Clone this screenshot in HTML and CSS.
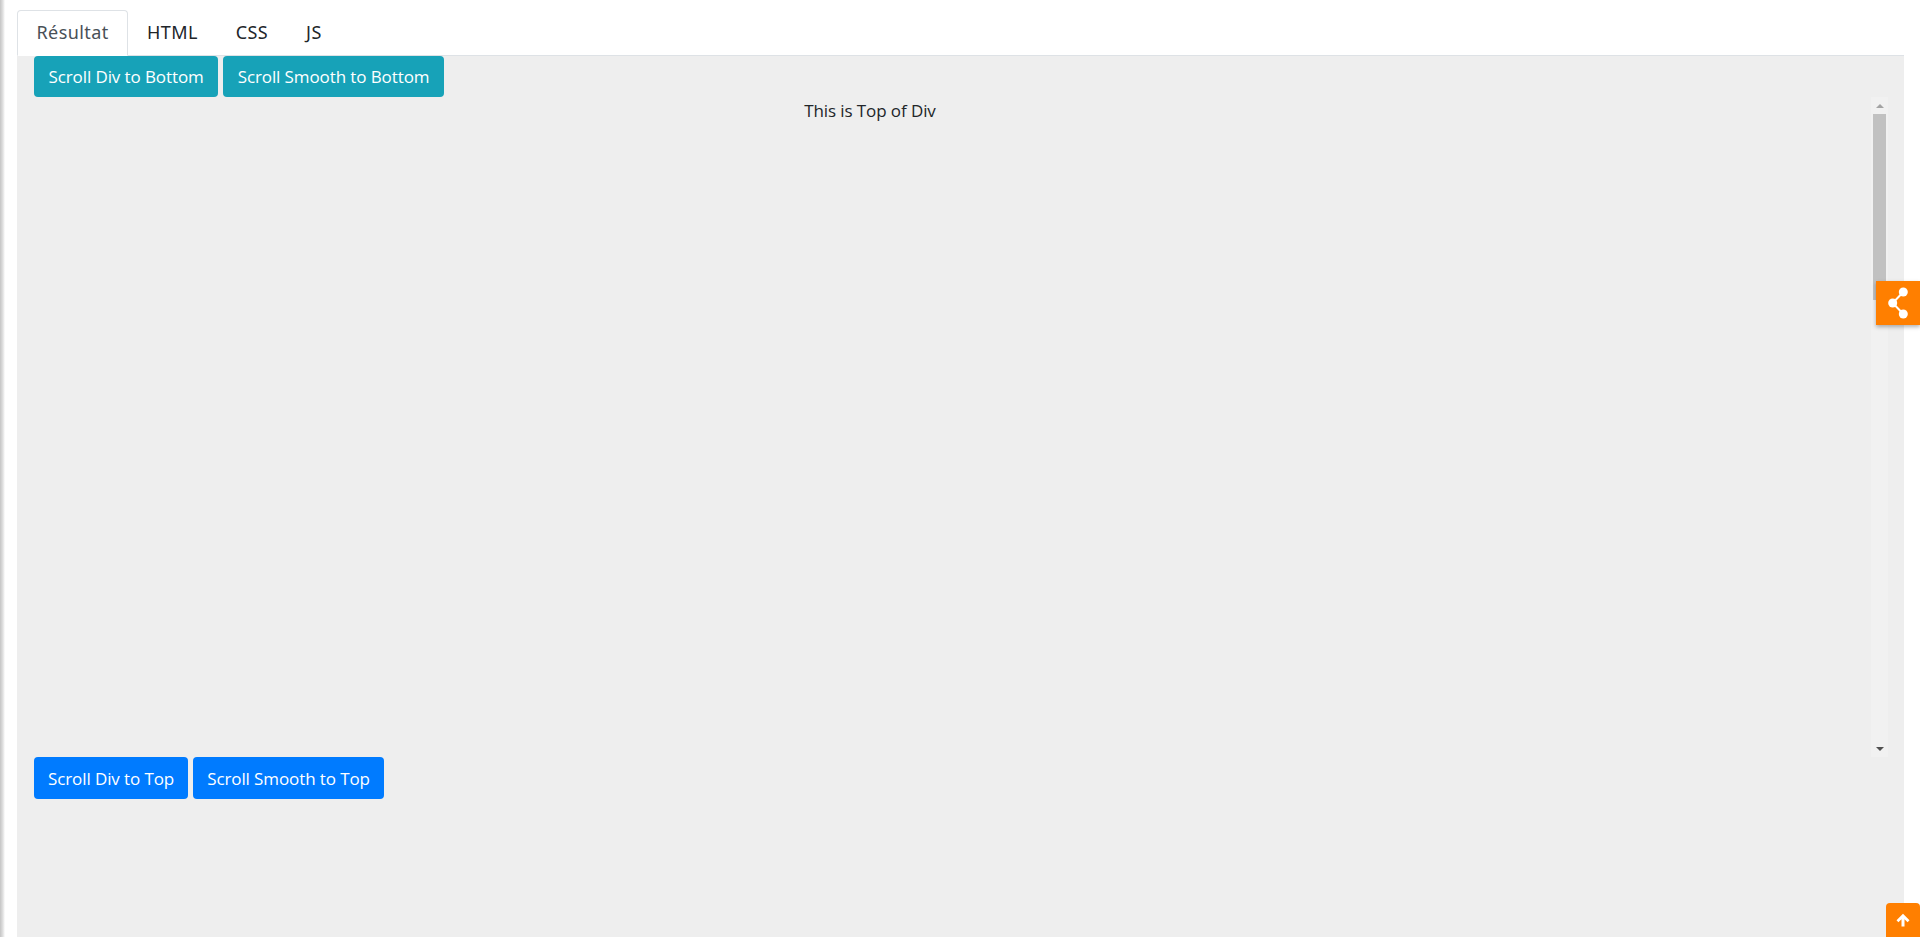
FILE: index.html
```html
<!DOCTYPE html>
<html lang="fr">
<head>
<meta charset="utf-8">
<title>Résultat</title>
<link rel="stylesheet" href="styles.css">
</head>
<body>
<div class="edge"></div>
<div class="page">
  <ul class="tabs">
    <li class="tab active">Résultat</li>
    <li class="tab">HTML</li>
    <li class="tab">CSS</li>
    <li class="tab">JS</li>
  </ul>
  <div class="panel">
    <div class="btn-row">
      <button class="btn btn-info">Scroll Div to Bottom</button>
      <button class="btn btn-info">Scroll Smooth to Bottom</button>
    </div>
    <div class="scroller">
      <div class="scroller-content">This is Top of Div</div>
      <div class="scrollbar">
        <div class="sb-button"><span class="arrow-up"></span></div>
        <div class="sb-track"><div class="sb-thumb"></div></div>
        <div class="sb-button"><span class="arrow-down"></span></div>
      </div>
    </div>
    <div class="btn-row">
      <button class="btn btn-primary">Scroll Div to Top</button>
      <button class="btn btn-primary">Scroll Smooth to Top</button>
    </div>
  </div>
</div>
<a class="share">
  <svg width="24" height="32" viewBox="0 0 24 32"><path d="M17.300 5 6.700 16l10.600 11" fill="none" stroke="#fff" stroke-width="2"/><circle cx="17.300" cy="5" r="4.500" fill="#fff"/><circle cx="6.700" cy="16" r="4.500" fill="#fff"/><circle cx="17.300" cy="27" r="4.500" fill="#fff"/></svg>
</a>
<a class="to-top">
  <svg width="14" height="14" viewBox="0 0 14 14"><path d="M7 .8.500 7.300l1.900 1.900L5.500 6.200V13.500h3V6.200l3.100 3 1.900-1.900z" fill="#fff"/></svg>
</a>
</body>
</html>
```

FILE: styles.css
```css
* { box-sizing: border-box; }
html, body { margin: 0; height: 100%; overflow: hidden; }
body { background: #fff; font-family: "Open Sans", "Noto Sans", sans-serif; font-size: 17px; letter-spacing: -.1px; color: #212529; }
.edge { position: absolute; left: 0; top: 0; bottom: 0; width: 5px; background: linear-gradient(to right, #c4c4c4, #e2e2e2 60%, #fff); }
.page { display: flex; flex-direction: column; height: 100%; padding: 10px 16px 0 17px; }
.tabs { display: flex; margin: 0; padding: 0; list-style: none; height: 46px; border-bottom: 1px solid #dee2e6; }
.tab { height: 46px; padding: 0 18px; font-family: "Noto Sans", sans-serif; font-size: 18px; letter-spacing: .4px; line-height: 42px; color: #212529; border: 1px solid transparent; border-radius: 4px 4px 0 0; }
.active { padding: 0 18.500px; color: #495057; background: #fff; border-color: #dee2e6 #dee2e6 #fff; }
.panel { flex: 1; background: #eee; padding: 0 16px 0 17px; }
.btn-row { display: flex; gap: 5px; height: 41px; }
.btn { padding: 0 14.500px; border: 0; border-radius: 4px; color: #fff; font-family: "Open Sans", sans-serif; font-size: 17px; letter-spacing: -.1px; }
.btn-info { height: 41px; background: #17a2b8; }
.btn-primary { height: 42px; padding: 0 14px; background: #007bff; }
.scroller { display: flex; height: 660px; }
.scroller-content { flex: 1; padding-right: 165px; padding-top: 1px; text-align: center; line-height: 25px; }
.scrollbar { display: flex; flex-direction: column; width: 17px; background: #f1f1f1; }
.sb-button { display: flex; align-items: center; justify-content: center; height: 17px; }
.sb-track { flex: 1; }
.sb-thumb { width: 13px; height: 186px; margin-left: 2px; background: #c1c1c1; }
.arrow-up { border: 4px solid transparent; border-top: 0; border-bottom-color: #a3a3a3; }
.arrow-down { border: 4px solid transparent; border-bottom: 0; border-top-color: #505050; }
.share { position: absolute; right: 0; top: 281px; display: flex; align-items: center; justify-content: center; width: 44px; height: 44px; background: #ff7f00; box-shadow: 0 2px 4px rgba(0,0,0,.3); }
.to-top { position: absolute; right: 0; bottom: 0; display: flex; align-items: center; justify-content: center; width: 34px; height: 34px; background: #ff7f00; border-radius: 4px 4px 0 0; }
```
